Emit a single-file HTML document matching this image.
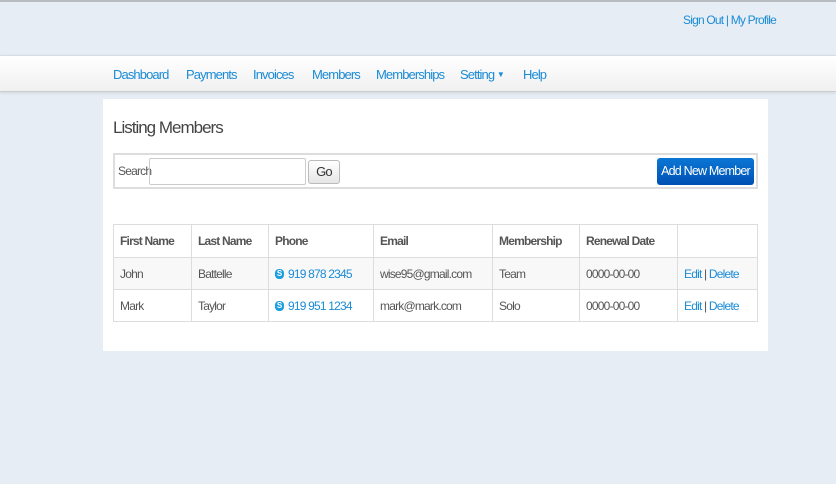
<!DOCTYPE html>
<html><head><style>
*{margin:0;padding:0;box-sizing:border-box}
body{width:836px;height:484px;background:#e6edf5;font-family:"Liberation Sans",sans-serif;font-size:12px;color:#555;position:relative;overflow:hidden;letter-spacing:-0.8px}
.top{position:absolute;left:0;top:0;width:836px;height:2px;background:#b8bcc0}
a{color:#1a8bd6;text-decoration:none}
.links{position:absolute;left:683px;top:13px;font-size:12px;color:#1a8bd6}
.nav{position:absolute;left:0;top:55px;width:836px;height:37px;background:linear-gradient(#fff,#f0f0f0);border-top:1px solid #d8dde2;border-bottom:1px solid #ccc;box-shadow:0 1px 3px rgba(0,0,0,.1)}
.nav a{position:absolute;top:11px;font-size:13px;letter-spacing:-0.9px}
.panel{position:absolute;left:103px;top:99px;width:665px;height:252px;background:#fff}
h1{position:absolute;left:10px;top:19px;font-size:17px;font-weight:normal;color:#444;letter-spacing:-1px}
.sbar{position:absolute;left:10px;top:54px;width:645px;height:36px;border:2px solid #ddd}
.sbar span{position:absolute;left:3px;top:9px;font-size:12px}
.inp{position:absolute;left:34px;top:3px;width:157px;height:27px;border:1px solid #ccc;border-radius:2px}
.go{position:absolute;left:193px;top:5px;width:32px;height:24px;border:1px solid #bbb;border-radius:3px;background:linear-gradient(#fff,#e6e6e6);text-align:center;line-height:22px;font-size:13px;color:#333}
.add{position:absolute;left:542px;top:3px;width:97px;height:27px;border-radius:3px;background:linear-gradient(#0a77d5,#0050b3);color:#fff;text-align:center;line-height:27px;font-size:12.5px}
table{position:absolute;left:10px;top:125px;width:645px;border-collapse:collapse}
td,th{border:1px solid #ddd;text-align:left;padding:0 6px;font-size:12px}
th{height:33px;font-weight:bold;color:#555}
td{height:32px}
tr.odd td{background:#f8f8f8}
.sk{display:inline-block;width:9px;height:10px;border-radius:4px;background:#1a9ee0;color:#fff;font-size:8px;line-height:10px;text-align:center;font-weight:bold;margin-right:4px;vertical-align:middle;letter-spacing:0}
</style></head><body>
<div class="top"></div>
<div class="links"><a>Sign Out</a> | <a>My Profile</a></div>
<div class="nav">
<a style="left:113px">Dashboard</a><a style="left:186px">Payments</a><a style="left:253px">Invoices</a><a style="left:312px">Members</a><a style="left:376px">Memberships</a><a style="left:460px">Setting <span style="font-size:8px;vertical-align:2px">▼</span></a><a style="left:523px">Help</a>
</div>
<div class="panel">
<h1>Listing Members</h1>
<div class="sbar"><span>Search</span><div class="inp"></div><div class="go">Go</div><div class="add">Add New Member</div></div>
<table>
<tr><th style="width:78px">First Name</th><th style="width:77px">Last Name</th><th style="width:105px">Phone</th><th style="width:119px">Email</th><th style="width:87px">Membership</th><th style="width:98px">Renewal Date</th><th></th></tr>
<tr class="odd"><td>John</td><td>Battelle</td><td><span class="sk">S</span><a>919 878 2345</a></td><td>wise95@gmail.com</td><td>Team</td><td>0000-00-00</td><td><a>Edit</a> | <a>Delete</a></td></tr>
<tr><td>Mark</td><td>Taylor</td><td><span class="sk">S</span><a>919 951 1234</a></td><td>mark@mark.com</td><td>Solo</td><td>0000-00-00</td><td><a>Edit</a> | <a>Delete</a></td></tr>
</table>
</div>
</body></html>
